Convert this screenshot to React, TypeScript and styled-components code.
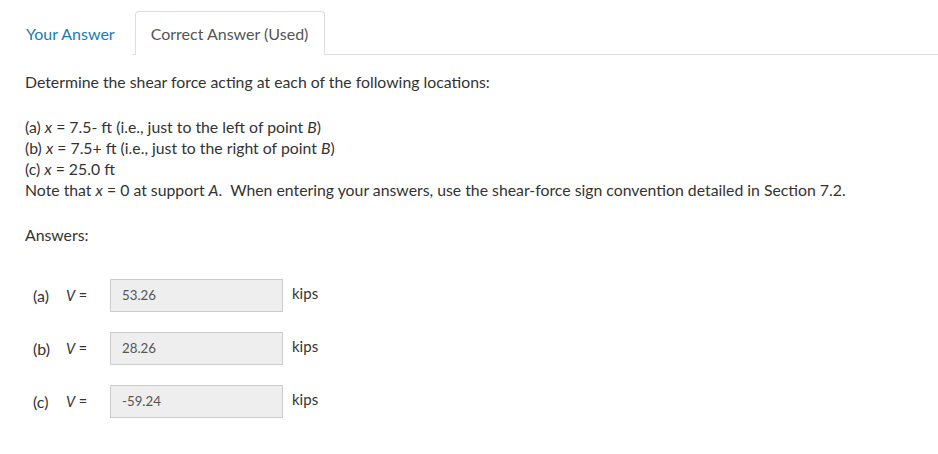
import styled, { createGlobalStyle } from 'styled-components'

const GlobalStyle = createGlobalStyle`
  body {
    margin: 0;
    background: #fff;
    font-family: Lato, "Open Sans", sans-serif;
    color: #333;
  }
`

const Page = styled.div`
  padding: 11px 0 0 10px;
`

const TabBar = styled.div`
  display: flex;
  border-bottom: 1px solid #ddd;
  height: 43px;
`

const Tab = styled.div<{ active?: boolean }>`
  display: flex;
  align-items: center;
  padding: 0 16px 1px 15px;
  margin-right: 3px;
  font-size: 16px;
  color: ${({ active }) => (active ? '#555' : '#1a7bb5')};
  background: #fff;
  border: 1px solid ${({ active }) => (active ? '#ddd' : 'transparent')};
  border-bottom: none;
  border-radius: 4px 4px 0 0;
  height: 44px;
  box-sizing: border-box;
`

const Content = styled.div`
  padding: 16px 0 0 15px;
  font-size: 15.8px;
  line-height: 21px;
`

const Para = styled.p`
  margin: 0 0 24px;
`

const Answers = styled.div`
  display: flex;
  flex-direction: column;
  gap: 20px;
  margin-top: 34px;
  padding-left: 8px;
`

const Row = styled.div`
  display: flex;
  align-items: center;
  font-size: 16px;
`

const Label = styled.span`
  width: 33px;
`

const Var = styled.span`
  width: 44px;
  font-size: 14.5px;
  i {
    font-style: italic;
  }
`

const Input = styled.div`
  width: 173px;
  height: 33px;
  box-sizing: border-box;
  background: #eee;
  border: 1px solid #ccc;
  padding: 0 11px;
  display: flex;
  align-items: center;
  color: #555;
  font-size: 13.3px;
`

const Unit = styled.span`
  margin-left: 9px;
  font-size: 15px;
  align-self: flex-start;
  margin-top: 4px;
`

const rows = [
  { label: '(a)', value: '53.26' },
  { label: '(b)', value: '28.26' },
  { label: '(c)', value: '-59.24' },
]

export default function App() {
  return (
    <>
      <GlobalStyle />
      <Page>
        <TabBar>
          <Tab>Your Answer</Tab>
          <Tab active>Correct Answer (Used)</Tab>
        </TabBar>
        <Content>
          <Para>Determine the shear force acting at each of the following locations:</Para>
          <Para>
            (a) <i>x</i> = 7.5- ft (i.e., just to the left of point <i>B</i>)<br />
            (b) <i>x</i> = 7.5+ ft (i.e., just to the right of point <i>B</i>)<br />
            (c) <i>x</i> = 25.0 ft<br />
            Note that <i>x</i> = 0 at support <i>A</i>.&nbsp; When entering your answers, use the
            shear-force sign convention detailed in Section 7.2.
          </Para>
          <div>Answers:</div>
          <Answers>
            {rows.map((r) => (
              <Row key={r.label}>
                <Label>{r.label}</Label>
                <Var>
                  <i>V</i> =
                </Var>
                <Input>{r.value}</Input>
                <Unit>kips</Unit>
              </Row>
            ))}
          </Answers>
        </Content>
      </Page>
    </>
  )
}
